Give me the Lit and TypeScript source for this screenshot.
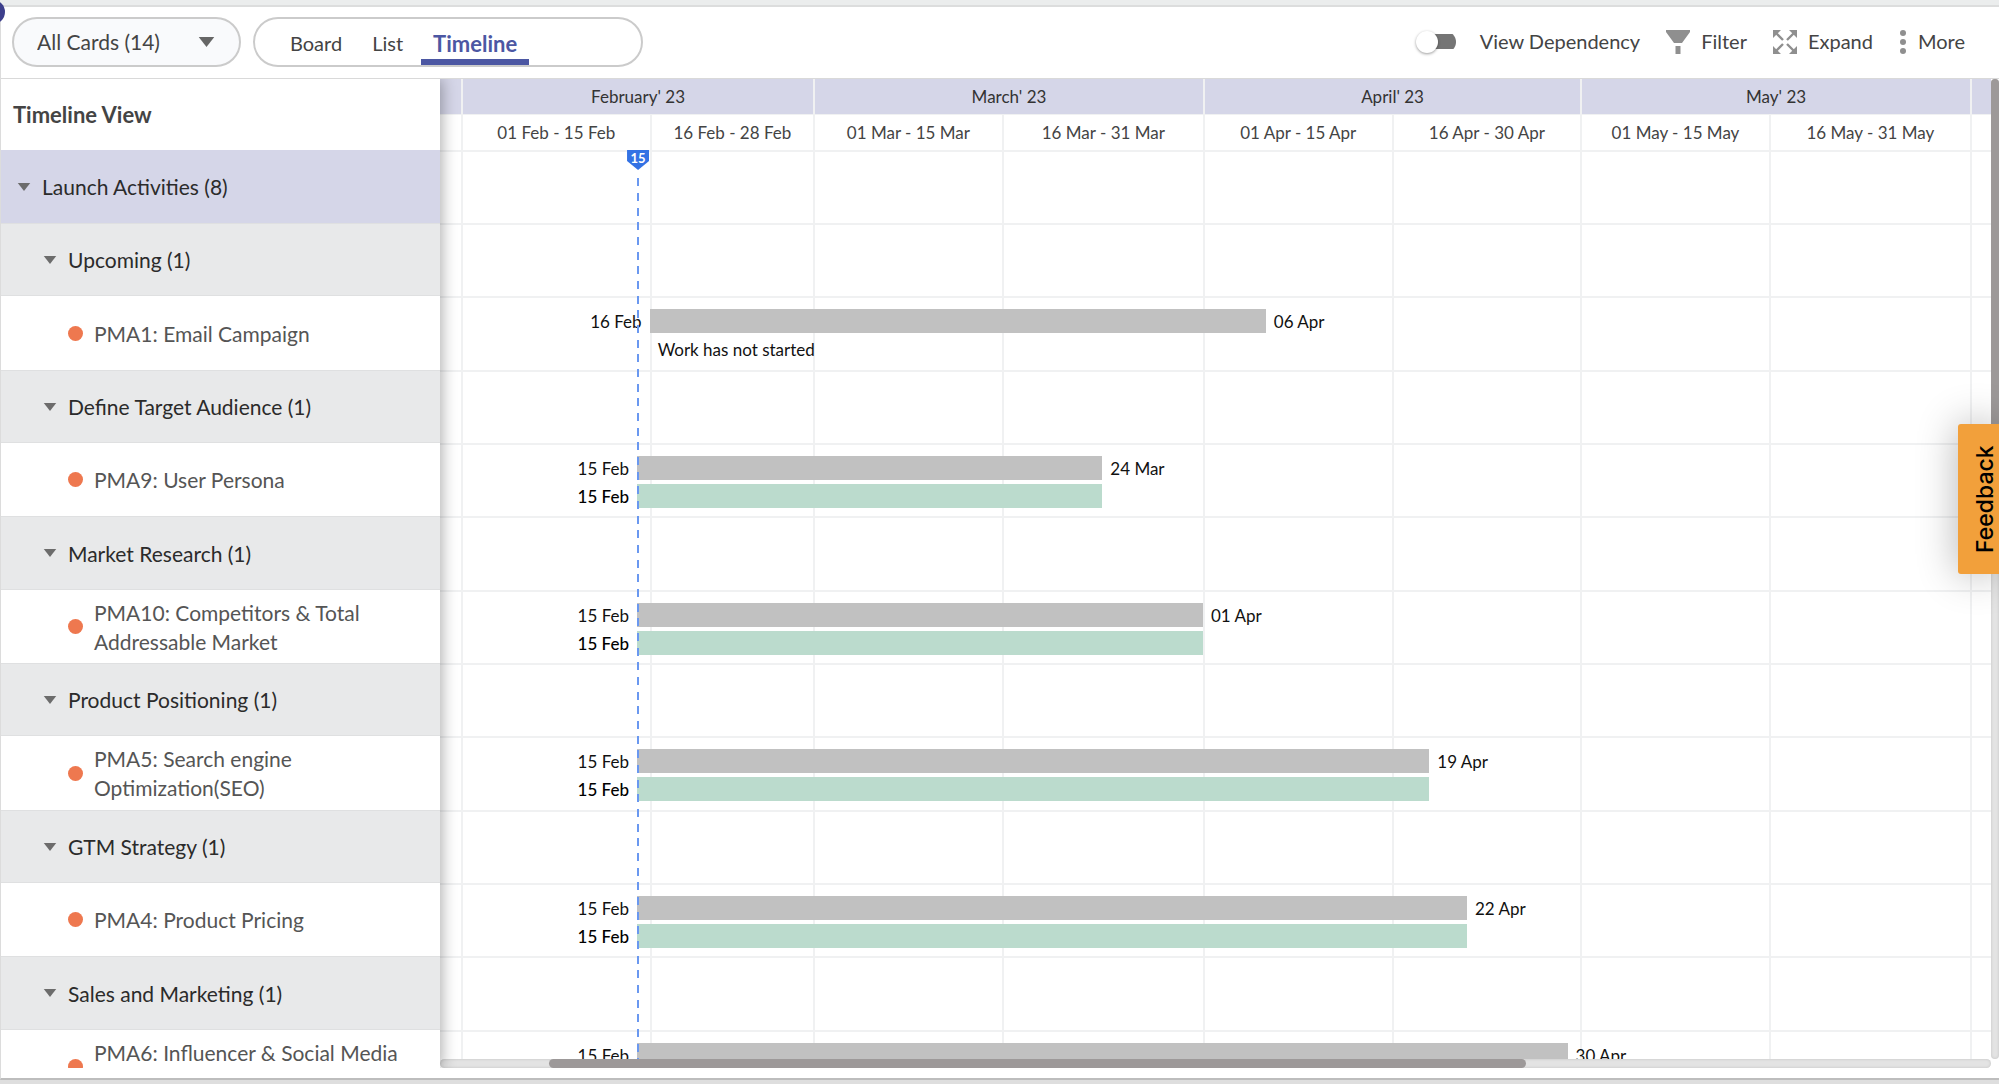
import { LitElement, html, css, svg } from "lit";
import { customElement, state } from "lit/decorators.js";
import { classMap } from "lit/directives/class-map.js";
import { styleMap } from "lit/directives/style-map.js";

type Row =
  | { kind: "root" | "group"; label: string }
  | { kind: "card"; label: string; start: string; from: number; end: string; to: number; started: boolean; tall?: boolean };

/* `from` and `to` are whole days counted from 1 February 2023. */
const ROWS: Row[] = [
  { kind: "root", label: "Launch Activities (8)" },
  { kind: "group", label: "Upcoming (1)" },
  { kind: "card", label: "PMA1: Email Campaign", start: "16 Feb", from: 15, end: "06 Apr", to: 64, started: false },
  { kind: "group", label: "Define Target Audience (1)" },
  { kind: "card", label: "PMA9: User Persona", start: "15 Feb", from: 14, end: "24 Mar", to: 51, started: true },
  { kind: "group", label: "Market Research (1)" },
  { kind: "card", label: "PMA10: Competitors & Total Addressable Market", start: "15 Feb", from: 14, end: "01 Apr", to: 59, started: true },
  { kind: "group", label: "Product Positioning (1)" },
  { kind: "card", label: "PMA5: Search engine Optimization(SEO)", start: "15 Feb", from: 14, end: "19 Apr", to: 77, started: true },
  { kind: "group", label: "GTM Strategy (1)" },
  { kind: "card", label: "PMA4: Product Pricing", start: "15 Feb", from: 14, end: "22 Apr", to: 80, started: true },
  { kind: "group", label: "Sales and Marketing (1)" },
  { kind: "card", label: "PMA6: Influencer & Social Media", start: "15 Feb", from: 14, end: "30 Apr", to: 88, started: true, tall: true },
];

const MONTHS = [
  { label: "February' 23", from: 0, to: 28 },
  { label: "March' 23", from: 28, to: 59 },
  { label: "April' 23", from: 59, to: 89 },
  { label: "May' 23", from: 89, to: 120 },
];

const HALVES = [
  { label: "01 Feb - 15 Feb", from: 0, to: 15 },
  { label: "16 Feb - 28 Feb", from: 15, to: 28 },
  { label: "01 Mar - 15 Mar", from: 28, to: 43 },
  { label: "16 Mar - 31 Mar", from: 43, to: 59 },
  { label: "01 Apr - 15 Apr", from: 59, to: 74 },
  { label: "16 Apr - 30 Apr", from: 74, to: 89 },
  { label: "01 May - 15 May", from: 89, to: 104 },
  { label: "16 May - 31 May", from: 104, to: 120 },
];

const TODAY = 14;
const span = (from: number, to: number) => styleMap({ "grid-column": `${from + 1} / ${to + 1}` });

const caret = html`<svg class="caret" viewBox="0 0 14 9" aria-hidden="true">${svg`<path d="M0 0H14L7 9Z" fill="currentColor"/>`}</svg>`;

@customElement("app-root")
export class AppRoot extends LitElement {
  @state() private view = "Timeline";

  static styles = css`
    :host {
      display: flex;
      flex-direction: column;
      height: 100vh;
      overflow: hidden;
      background: #dedede;
      color: #444;
      font-family: Lato, "Open Sans", sans-serif;
      font-size: 21px;
      line-height: 29px;
      --line: #f0f1f2;
      --lilac: #d5d6e8;
    }
    * { box-sizing: border-box; }
    button, select { font: inherit; color: inherit; background: none; border: 0; padding: 0; margin: 0; cursor: pointer; }
    .strip { flex: none; height: 7px; background: #ebeded; border-bottom: 2px solid #dcdddd; }
    .knob { position: absolute; left: -19px; top: 0; width: 24px; height: 24px; border-radius: 50%; background: #3d3f8c; }
    .shell {
      flex: 1; min-height: 0; display: flex; flex-direction: column;
      margin-bottom: 4px; padding-bottom: 10px; background: #fff;
      border-left: 1px solid #dcdcdc; border-bottom: 2px solid #bdbdbd;
    }
    .toolbar {
      flex: none; height: 72px; display: flex; align-items: center; gap: 12px;
      padding: 0 34px 2px 11px; border-bottom: 1px solid #d9d9d9; font-size: 20px;
    }
    .pill { height: 50px; border: 2px solid #cbcbcb; border-radius: 25px; display: flex; }
    .picker { width: 229px; background: #f9fafc; display: grid; align-items: center; font-size: 21px; }
    .picker select { grid-area: 1 / 1; height: 100%; appearance: none; padding: 0 52px 0 23px; outline-offset: -4px; border-radius: 25px; }
    .picker .caret { grid-area: 1 / 1; justify-self: end; margin-right: 23px; width: 19px; height: 10px; color: #666; pointer-events: none; }
    .tabs { width: 390px; padding-left: 23px; }
    .tab { padding: 10px 12px 0; border-bottom: 6px solid transparent; margin-right: 6px; }
    .tab.on { color: #4c57a3; border-color: #4c57a3; font-weight: 700; font-size: 22px; }
    .tools { margin-left: auto; display: flex; align-items: center; gap: 26px; }
    .dependency { display: flex; align-items: center; gap: 24px; cursor: pointer; }
    .switch {
      appearance: none; margin: 0; width: 40px; height: 22px; display: flex; align-items: center; cursor: pointer;
      background: linear-gradient(#757575, #757575) right center / 32px 15px no-repeat; border-radius: 11px;
    }
    .switch::before { content: ""; width: 22px; height: 22px; border-radius: 50%; background: #fff; box-shadow: 0 1px 3px rgba(0,0,0,.4); }
    .switch:checked::before { margin-left: 18px; }
    .tool { display: flex; align-items: center; gap: 11px; }
    .tool svg { width: 24px; height: 24px; color: #8f8f8f; }
    .tool .dots { width: 8px; }
    .board { flex: 1; min-height: 0; display: flex; }
    .side { flex: none; width: 439px; background: #fff; overflow: hidden; }
    .side-wrap { display: flex; z-index: 2; box-shadow: 2px 0 14px rgba(0,0,0,.32); clip-path: inset(0 -20px 0 0); }
    .title { margin: 0; height: 71px; padding: 0 12px; display: flex; align-items: center; font-size: 22px; font-weight: 700; color: #444; }
    .rows { display: grid; grid-auto-rows: 73px 73px 74px; }
    .item { display: flex; align-items: center; text-align: left; }
    .root, .group { gap: 11px; color: #2b2b2b; width: 100%; }
    .root { background: var(--lilac); padding-left: 16px; }
    .group { background: #e8e9ea; padding-left: 42px; border: 1px solid #dfe0e1; border-width: 1px 0; }
    .caret { flex: none; width: 14px; height: 8px; color: #6c6c6c; }
    .card { gap: 11px; padding: 0 20px 0 67px; color: #555; }
    .tall { min-height: 58px; }
    .dot { flex: none; width: 15px; height: 15px; border-radius: 50%; background: #ee784f; }
    .chart { flex: 1; min-width: 0; display: flex; flex-direction: column; }
    .main { flex: 1; min-height: 0; display: flex; }
    .view { flex: 1; min-width: 0; overflow: hidden; font-size: 17px; line-height: 24px; }
    .days { display: grid; grid-template-columns: repeat(120, minmax(0, 1fr)); padding: 0 21px; }
    .head { display: flex; align-items: center; justify-content: center; border-left: 2px solid var(--line); white-space: nowrap; }
    .head:last-child { border-right: 2px solid var(--line); margin-right: -2px; }
    .months { height: 35px; background: var(--lilac); color: #333; }
    .halves { height: 36px; border-top: 1px solid var(--line); color: #444; }
    .canvas { display: grid; }
    .canvas > * { grid-area: 1 / 1; }
    .track { border-top: 2px solid var(--line); grid-template-rows: 24px 24px; row-gap: 4px; padding-top: 11px; color: #111; white-space: nowrap; }
    .plan { grid-row: 1; background: #c1c1c1; }
    .actual { grid-row: 2; background: #bbdbcd; }
    .from, .to, .note { padding: 1px 8px 0; }
    .from { justify-self: end; }
    .r1 { grid-row: 1; }
    .r2 { grid-row: 2; }
    .strong { font-weight: 500; color: #000; }
    .today { z-index: 1; pointer-events: none; }
    .pin { display: flex; flex-direction: column; align-items: center; width: 22px; margin-left: -10px; }
    .flag {
      width: 22px; height: 20px; background: #3372e4; color: #fff; font-size: 13px; line-height: 16px; font-weight: 700; text-align: center;
      clip-path: polygon(0 0, 100% 0, 100% 55%, 50% 100%, 0 55%);
    }
    .dash {
      flex: 1; width: 2px; margin-top: 8px;
      background: repeating-linear-gradient(#6a98f0 0 8px, transparent 8px 15px, #6a98f0 15px 23px, transparent 23px 30px, #6a98f0 30px 38px, transparent 38px 44px);
    }
    .vbar, .hbar { background: #e3e3e3; border-radius: 5px; box-shadow: inset 0 0 3px rgba(0,0,0,.15); flex: none; }
    .vbar { width: 8px; }
    .vbar i { display: block; height: 50%; border-radius: 5px; background: #9d9999; }
    .hbar { height: 9px; margin-right: 8px; }
    .hbar i { display: block; height: 100%; width: 63%; margin-left: 7%; border-radius: 5px; background: #9d9999; }
    .feedback {
      position: absolute; right: 0; top: 424px; width: 41px; height: 150px; z-index: 3;
      writing-mode: vertical-rl; transform: rotate(180deg); background: #f2a03b; color: #000;
      border-radius: 0 3px 3px 0; box-shadow: 0 0 40px rgba(0,0,0,.3);
      font: 500 23px/28px Inter, "Liberation Sans", sans-serif; text-align: center; padding-right: 13px;
    }
  `;

  private sideRow(r: Row) {
    if (r.kind === "card") {
      return html`<div class="item card"><span class="dot"></span><span class=${classMap({ tall: !!r.tall })}>${r.label}</span></div>`;
    }
    return html`<button class="item ${r.kind}" aria-expanded="true">${caret}<span>${r.label}</span></button>`;
  }

  private trackRow(r: Row) {
    if (r.kind !== "card") return html`<div class="days track"></div>`;
    return html`<div class="days track">
      <span class="from r1" style=${span(0, r.from)}>${r.start}</span>
      <span class="plan" style=${span(r.from, r.to)}></span>
      <span class="to r1" style=${span(r.to, 120)}>${r.end}</span>
      ${r.started
        ? html`<span class="from r2 strong" style=${span(0, r.from)}>${r.start}</span>
            <span class="actual" style=${span(r.from, r.to)}></span>`
        : html`<span class="note r2" style=${span(r.from, r.to)}>Work has not started</span>`}
    </div>`;
  }

  render() {
    return html`
      <div class="strip"></div>
      <div class="knob"></div>
      <main class="shell">
        <header class="toolbar">
          <div class="pill picker">
            <select aria-label="Cards"><option>All Cards (14)</option></select>
            ${caret}
          </div>
          <nav class="pill tabs" aria-label="View">
            ${["Board", "List", "Timeline"].map(
              (v) => html`<button class=${classMap({ tab: true, on: this.view === v })} aria-pressed=${this.view === v} @click=${() => (this.view = v)}>${v}</button>`
            )}
          </nav>
          <div class="tools">
            <label class="dependency"><input class="switch" type="checkbox" role="switch" />View Dependency</label>
            <button class="tool">
              <svg viewBox="0 0 24 24" aria-hidden="true"><path d="M0 0H24V2L16 13H8L0 2ZM9.500 16H14.500V24H9.500Z" fill="currentColor" /></svg>Filter
            </button>
            <button class="tool">
              <svg viewBox="0 0 24 24" aria-hidden="true">
                <path d="M0 0H8L0 8ZM24 0V8L16 0ZM0 24V16L8 24ZM24 24H16L24 16Z" fill="currentColor" />
                <path d="M3 3L10 10M21 3L14 10M3 21L10 14M21 21L14 14" stroke="currentColor" stroke-width="2.4" />
              </svg>Expand
            </button>
            <button class="tool">
              <svg class="dots" viewBox="0 0 6 24" aria-hidden="true"><g fill="currentColor"><circle cx="3" cy="3" r="3" /><circle cx="3" cy="12" r="3" /><circle cx="3" cy="21" r="3" /></g></svg>More
            </button>
          </div>
        </header>
        <div class="board">
          <div class="side-wrap">
            <section class="side">
              <h1 class="title">Timeline View</h1>
              <div class="rows">${ROWS.map((r) => this.sideRow(r))}</div>
            </section>
          </div>
          <div class="chart">
            <div class="main">
              <div class="view">
                <div class="days months">${MONTHS.map((m) => html`<div class="head" style=${span(m.from, m.to)}>${m.label}</div>`)}</div>
                <div class="days halves">${HALVES.map((h) => html`<div class="head" style=${span(h.from, h.to)}>${h.label}</div>`)}</div>
                <div class="canvas">
                  <div class="days">${HALVES.map((h) => html`<div class="head" style=${span(h.from, h.to)}></div>`)}</div>
                  <div class="rows">${ROWS.map((r) => this.trackRow(r))}</div>
                  <div class="days today">
                    <div class="pin" style=${span(TODAY, TODAY + 1)}><span class="flag">15</span><span class="dash"></span></div>
                  </div>
                </div>
              </div>
              <div class="vbar" aria-hidden="true"><i></i></div>
            </div>
            <div class="hbar" aria-hidden="true"><i></i></div>
          </div>
        </div>
      </main>
      <button class="feedback">Feedback</button>
    `;
  }
}
